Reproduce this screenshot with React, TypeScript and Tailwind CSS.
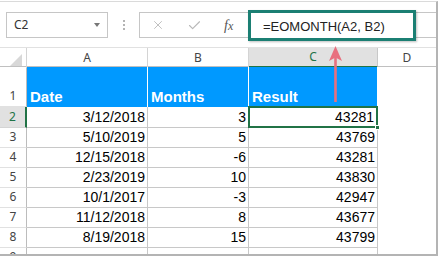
import { X, Check } from 'lucide-react';

const rows = [
  ['3/12/2018', '3', '43281'],
  ['5/10/2019', '5', '43769'],
  ['12/15/2018', '-6', '43281'],
  ['2/23/2019', '10', '43830'],
  ['10/1/2017', '-3', '42947'],
  ['11/12/2018', '8', '43677'],
  ['8/19/2018', '15', '43799'],
];

const grid = 'grid shrink-0 grid-cols-[27px_121px_101px_129px_1fr]';

function RowHead({ n, active }: { n: string; active?: boolean }) {
  return (
    <div
      className={
        active
          ? 'flex items-end justify-center border-r-2 border-r-[#217346] border-b border-b-[#d4d4d4] bg-[#e1e1e1] pb-[3px] text-[12px] leading-[14px] text-[#217346]'
          : 'flex items-end justify-center border-r border-r-[#bcbcbc] border-b border-b-[#e1e1e1] pb-[3px] text-[12px] leading-[14px] text-[#444]'
      }
      style={{ fontFamily: '"Noto Sans", sans-serif' }}
    >
      {n}
    </div>
  );
}

function Cell({ v }: { v: string }) {
  return (
    <div className="flex items-end justify-end border-r border-b border-[#c8c8c8] pr-[2px] pb-[2px] text-[14px] leading-[16px] text-black">
      {v}
    </div>
  );
}

export default function App() {
  return (
    <div className="h-[257px] w-[439px] overflow-hidden bg-white" style={{ fontFamily: '"Liberation Sans", Arial, sans-serif' }}>
      <div className="relative mt-px flex h-[255px] w-[438px] flex-col overflow-hidden border-t border-r-2 border-b-2 border-t-[#dadada] border-r-[#b4b4b4] border-b-[#b4b4b4]">
        {/* formula bar */}
        <div className="mt-[10px] flex h-[26px] shrink-0">
          <div className="ml-[6px] flex w-[102px] items-center justify-between border border-[#c6c6c6] pl-[7px] pr-[7px]">
            <span className="text-[12px] text-[#333]" style={{ fontFamily: '"Noto Sans", sans-serif' }}>C2</span>
            <span className="h-0 w-0 border-x-[3.5px] border-t-[4px] border-x-transparent border-t-[#777]" />
          </div>
          <div className="flex w-[31px] flex-col items-center justify-center gap-[2px]">
            <span className="h-[2px] w-[2px] bg-[#b4b4b4]" />
            <span className="h-[2px] w-[2px] bg-[#b4b4b4]" />
            <span className="h-[2px] w-[2px] bg-[#b4b4b4]" />
          </div>
          <div className="flex flex-1 items-center border-y border-l border-[#c6c6c6]">
            <X size={14} strokeWidth={1.5} className="ml-[11px] text-[#b8b8b8]" />
            <Check size={15} strokeWidth={1.8} className="ml-[22px] text-[#b8b8b8]" />
            <span className="ml-[22px] text-[14px] italic text-[#555]" style={{ fontFamily: '"Liberation Serif", serif' }}>
              f<span className="text-[12px]">x</span>
            </span>
          </div>
        </div>

        {/* column headers */}
        <div className={`${grid} mt-[9px] h-[20px] border-y border-t-[#e1e1e1] border-b-[#c0c0c0] text-[12px] text-[#444]`} style={{ fontFamily: '"Noto Sans", sans-serif' }}>
          <div className="relative border-r border-[#d4d4d4]">
            <span className="absolute right-[4px] bottom-[2px] h-0 w-0 border-b-[12px] border-l-[12px] border-b-[#d8d8d8] border-l-transparent" />
          </div>
          <div className="flex items-center justify-center border-r border-[#d4d4d4]">A</div>
          <div className="flex items-center justify-center border-r border-[#d4d4d4]">B</div>
          <div className="flex items-center justify-center border-r border-b-2 border-r-[#c8c8c8] border-b-[#217346] bg-[#e1e1e1] text-[#217346]">C</div>
          <div className="flex items-center justify-center">D</div>
        </div>

        {/* header row 1 */}
        <div className={`${grid} h-[40px]`}>
          <RowHead n="1" />
          {['Date', 'Months', 'Result'].map((h) => (
            <div key={h} className="flex items-end border-r border-white bg-[#0099ff] pb-[2px] pl-[3px] text-[15px] font-bold leading-[17px] text-white">
              {h}
            </div>
          ))}
          <div />
        </div>

        {rows.map((r, i) => (
          <div key={i} className={`${grid} ${i === 0 ? 'h-[21px]' : 'h-[20px]'}`}>
            <RowHead n={String(i + 2)} active={i === 0} />
            <Cell v={r[0]} />
            <Cell v={r[1]} />
            {i === 0 ? (
              <div className="relative flex items-end justify-end border-r border-b border-[#c8c8c8] pr-[3px] pb-[2px] text-[14px] leading-[16px] text-black">
                <span className="absolute -top-px -left-px -right-px -bottom-px border-2 border-[#217346]" />
                <span className="absolute -right-[3px] -bottom-[3px] h-[5px] w-[5px] border border-white bg-[#217346]" />
                {r[2]}
              </div>
            ) : (
              <Cell v={r[2]} />
            )}
            <div />
          </div>
        ))}

        <div className={`${grid} h-[20px]`}>
          <RowHead n="9" />
          <div className="border-r border-[#c8c8c8]" />
          <div className="border-r border-[#c8c8c8]" />
          <div className="border-r border-[#c8c8c8]" />
          <div />
        </div>

        {/* highlighted formula */}
        <div className="absolute top-[8px] left-[248px] flex h-[31px] w-[168px] items-center border-[3px] border-[#1b7f73] bg-white pt-[3px] pl-[12px] text-[13px] text-[#222] shadow-[1px_1px_2px_rgba(0,0,0,0.25)]" style={{ fontFamily: '"Liberation Sans", Arial, sans-serif' }}>
          =EOMONTH(A2, B2)
        </div>

        {/* arrow */}
        <svg className="absolute top-[43px] left-[328px]" width="15" height="58" viewBox="0 0 15 58">
          <path d="M7.5 1 L14 16 L7.5 12.5 L1 16 Z" fill="#e8707f" />
          <rect x="6.2" y="12" width="2.6" height="45" fill="#e8707f" />
        </svg>
      </div>
    </div>
  );
}
